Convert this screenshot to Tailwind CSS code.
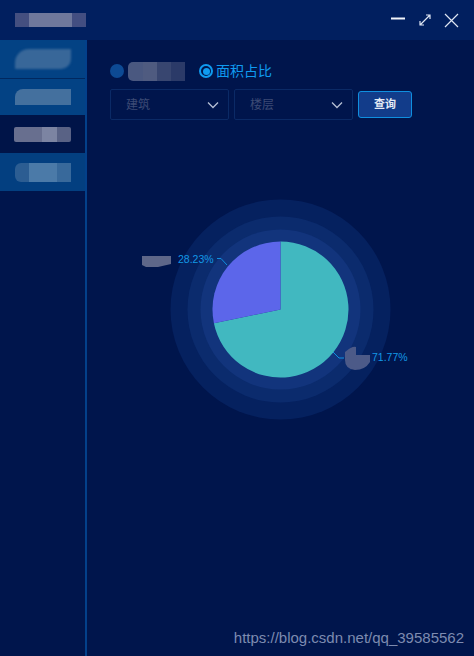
<!DOCTYPE html>
<html lang="zh">
<head>
    <meta charset="UTF-8">
    <meta name="viewport" content="width=device-width, initial-scale=1.0">
    <title>面积占比</title>
    <script src="https://cdn.jsdelivr.net/npm/@tailwindcss/browser@4"></script>
</head>

<body class="bg-[#00154c] font-['Liberation_Sans','Noto_Sans_CJK_SC',sans-serif]">
    <div class="relative flex h-[656px] w-[474px] flex-col overflow-hidden">

        <!-- Title bar -->
        <header class="flex h-10 shrink-0 items-center justify-between bg-[#011f5f] pl-[15px] pr-[15px]">
            <div class="flex h-[14px] w-[71px] rounded-[1px] blur-[0.5px]">
                <span class="w-[14px] bg-[#444f80]"></span>
                <span class="w-[43px] bg-[#6f789c]"></span>
                <span class="w-[14px] bg-[#434e81]"></span>
            </div>
            <div class="flex items-center gap-[13px]">
                <svg class="h-4 w-4" viewBox="0 0 16 16" fill="none" stroke="#f2f5fb">
                    <path d="M1 6.5H15" stroke-width="2"/>
                </svg>
                <svg class="h-3 w-3" viewBox="0 0 12 12" fill="none" stroke="#dfe6f3" stroke-width="1.2">
                    <path d="M1.5 10.5L10.5 1.5M7 1H11V5M1 7V11H5"/>
                </svg>
                <svg class="h-[15px] w-[15px]" viewBox="0 0 15 15" fill="none" stroke="#dfe6f3" stroke-width="1.2">
                    <path d="M1 1L14 14M14 1L1 14"/>
                </svg>
            </div>
        </header>

        <div class="flex min-h-0 flex-1">
            <!-- Sidebar -->
            <aside class="w-[87px] shrink-0 border-r-2 border-[#03408a]">
                <div class="flex h-[38px] items-center bg-[#034284] pl-[15px]">
                    <div class="h-[20px] w-[56px] rounded-tl-[14px] rounded-br-[10px] bg-[#386799] blur-[1px]"></div>
                </div>
                <div class="flex h-[37px] items-center border-t border-[#01285f] bg-[#034284] pl-[15px]">
                    <div class="h-[16px] w-[56px] rounded-tl-[8px] bg-[#44709e] blur-[0.5px]"></div>
                </div>
                <div class="flex h-[38px] items-center bg-[#001448] pl-[14px]">
                    <div class="flex h-[15px] w-[57px] overflow-hidden rounded-[2px]">
                        <span class="w-[28px] bg-[#686f8f]"></span>
                        <span class="w-[15px] bg-[#7c84a2]"></span>
                        <span class="w-[14px] bg-[#596285]"></span>
                    </div>
                </div>
                <div class="flex h-[38px] items-center bg-[#033f80] pl-[15px]">
                    <div class="flex h-[19px] w-[56px] overflow-hidden rounded-l-[6px] blur-[0.5px]">
                        <span class="w-[14px] bg-[#2c5d92]"></span>
                        <span class="w-[28px] bg-[#4b7aa8]"></span>
                        <span class="w-[14px] bg-[#38699b]"></span>
                    </div>
                </div>
            </aside>

            <!-- Main -->
            <main class="min-w-0 flex-1 pl-[23px] pt-[20px]">
                <div class="flex h-[22px] items-center">
                    <span class="h-[14px] w-[14px] rounded-full bg-[#0d4a94]"></span>
                    <div class="ml-[4px] flex h-[19px] w-[57px] overflow-hidden rounded-l-[5px] blur-[0.5px]">
                        <span class="w-[15px] bg-[#4a5880]"></span>
                        <span class="w-[14px] bg-[#4f5b80]"></span>
                        <span class="w-[14px] bg-[#384670]"></span>
                        <span class="w-[14px] bg-[#2b3a68]"></span>
                    </div>
                    <span class="ml-[14px] flex h-[14px] w-[14px] items-center justify-center rounded-full border-2 border-[#0f9bf0]">
                        <span class="h-[7px] w-[7px] rounded-full bg-[#0f9bf0]"></span>
                    </span>
                    <span class="ml-[3px] text-[14px] leading-none text-[#0f9bf0]">面积占比</span>
                </div>
                <div class="mt-[7px] flex items-center">
                    <div class="flex h-[31px] w-[119px] items-center justify-between rounded-[2px] border border-[#0b2a66] pl-[15px] pr-[9px] text-xs text-[#3d4b75]">
                        <span>建筑</span>
                        <svg class="h-3 w-3" viewBox="0 0 12 12" fill="none" stroke="#b5bfd4" stroke-width="1.3"><path d="M1 3.5L6 8.5L11 3.5"/></svg>
                    </div>
                    <div class="ml-[5px] flex h-[31px] w-[119px] items-center justify-between rounded-[2px] border border-[#0b2a66] pl-[15px] pr-[9px] text-xs text-[#3d4b75]">
                        <span>楼层</span>
                        <svg class="h-3 w-3" viewBox="0 0 12 12" fill="none" stroke="#b5bfd4" stroke-width="1.3"><path d="M1 3.5L6 8.5L11 3.5"/></svg>
                    </div>
                    <button class="ml-[5px] h-[27px] w-[54px] rounded-[3px] border border-[#0f8fe0] bg-[#123c8a] text-[11px] font-bold text-[#e4eaf5]">查询</button>
                </div>
            </main>
        </div>

        <!-- Pie chart -->
        <svg class="absolute left-0 top-0" width="474" height="656" viewBox="0 0 474 656" fill="none">
            <circle cx="280.5" cy="309.5" r="110" fill="#05215f"/>
            <circle cx="280.5" cy="309.5" r="93" fill="#0b2b6d"/>
            <circle cx="280.5" cy="309.5" r="80" fill="#12347c"/>
            <path d="M280.5 309.5V241.5A68 68 0 1 1 213.9 323.2Z" fill="#41b8c0"/>
            <path d="M280.5 309.5L213.9 323.2A68 68 0 0 1 280.5 241.5Z" fill="#5c66ea"/>
            <path d="M217 258.5H221L227 265M333 352L339 358H344" stroke="#0f8fe0" stroke-width="1"/>
            <path d="M142 256H171V264L158 267H146L142 265Z" fill="#6e7694" opacity="0.85"/>
            <path d="M345 352Q352 346 356 347V355H370V362Q365 370 355 370Q345 369 345 360Z" fill="#4c5a88"/>
            <text x="178" y="263" font-size="10.5" fill="#1398e6" font-family="Liberation Sans">28.23%</text>
            <text x="372" y="361" font-size="10.5" fill="#1398e6" font-family="Liberation Sans">71.77%</text>
        </svg>

        <!-- Watermark -->
        <span class="absolute bottom-[8px] right-[10px] text-[15px] leading-[20px] text-[#7d8bb0]">https://blog.csdn.net/qq_39585562</span>
    </div>
</body>
</html>
